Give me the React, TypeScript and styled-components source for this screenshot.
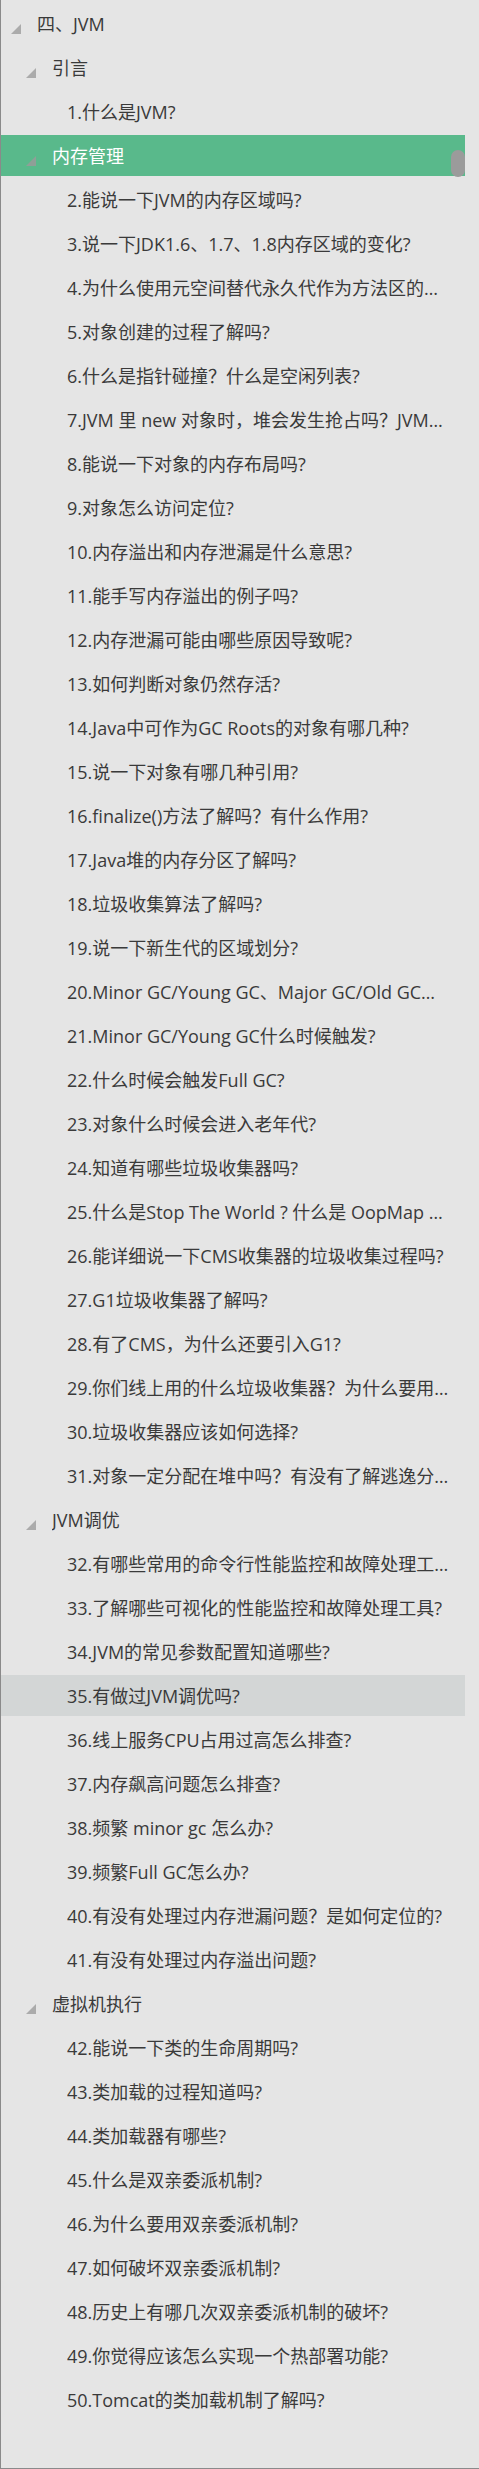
import React from 'react'
import styled, { createGlobalStyle } from 'styled-components'

const GlobalStyle = createGlobalStyle`
  html, body {
    margin: 0;
    padding: 0;
    background: #e5e5e5;
  }
  body {
    font-family: "Open Sans", "Noto Sans CJK SC", sans-serif;
  }
`

const Page = styled.div`
  width: 479px;
  height: 2469px;
  box-sizing: border-box;
  border-left: 1px solid #8a8a8a;
  border-bottom: 1px solid #8a8a8a;
  background: #e5e5e5;
  overflow: hidden;
`

const Tree = styled.ul`
  position: relative;
  width: 464px;
  margin: 0;
  padding: 0;
  list-style: none;
`

type RowState = 'normal' | 'active' | 'hover'

const Row = styled.li<{ $level: number; $state: RowState }>`
  display: flex;
  align-items: center;
  height: 41px;
  margin: 3px 0 1px;
  padding: 0 13px 0 ${(p) => 10 + p.$level * 15}px;
  background: ${(p) =>
    p.$state === 'active' ? '#59b98b' : p.$state === 'hover' ? '#d3d6d6' : 'transparent'};
  color: ${(p) => (p.$state === 'active' ? '#ffffff' : '#3a3a3a')};
  font-size: 18px;
  white-space: nowrap;
`

const Toggle = styled.span<{ $open: boolean; $active: boolean }>`
  flex: none;
  display: flex;
  align-items: flex-end;
  width: 26px;
  height: 20px;
  padding-top: 6px;
  box-sizing: border-box;
  visibility: ${(p) => (p.$open ? 'visible' : 'hidden')};
  svg {
    display: block;
    fill: ${(p) => (p.$active ? '#8f9f97' : '#ababab')};
  }
`

const Label = styled.span`
  flex: 1;
  min-width: 0;
  overflow: hidden;
  text-overflow: ellipsis;
  line-height: 24px;
`

const ScrollThumb = styled.div`
  position: absolute;
  top: 147px;
  right: 0;
  width: 14px;
  height: 27px;
  border-radius: 7px;
  background: #9b9b9b;
`

type Node = { text: string; level: number; group?: boolean; state?: RowState }

const item = (text: string, state?: RowState): Node => ({ text, level: 2, state })
const group = (text: string, level: number, state?: RowState): Node => ({
  text,
  level,
  group: true,
  state,
})

const nodes: Node[] = [
  group('四、JVM', 0),
  group('引言', 1),
  item('1.什么是JVM?'),
  group('内存管理', 1, 'active'),
  item('2.能说一下JVM的内存区域吗?'),
  item('3.说一下JDK1.6、1.7、1.8内存区域的变化?'),
  item('4.为什么使用元空间替代永久代作为方法区的实现?'),
  item('5.对象创建的过程了解吗?'),
  item('6.什么是指针碰撞？什么是空闲列表?'),
  item('7.JVM 里 new 对象时，堆会发生抢占吗？JVM是怎么设计来保证线程安全的?'),
  item('8.能说一下对象的内存布局吗?'),
  item('9.对象怎么访问定位?'),
  item('10.内存溢出和内存泄漏是什么意思?'),
  item('11.能手写内存溢出的例子吗?'),
  item('12.内存泄漏可能由哪些原因导致呢?'),
  item('13.如何判断对象仍然存活?'),
  item('14.Java中可作为GC Roots的对象有哪几种?'),
  item('15.说一下对象有哪几种引用?'),
  item('16.finalize()方法了解吗？有什么作用?'),
  item('17.Java堆的内存分区了解吗?'),
  item('18.垃圾收集算法了解吗?'),
  item('19.说一下新生代的区域划分?'),
  item('20.Minor GC/Young GC、Major GC/Old GC、Mixed GC、Full GC都是什么意思?'),
  item('21.Minor GC/Young GC什么时候触发?'),
  item('22.什么时候会触发Full GC?'),
  item('23.对象什么时候会进入老年代?'),
  item('24.知道有哪些垃圾收集器吗?'),
  item('25.什么是Stop The World ? 什么是 OopMap ？什么是安全点?'),
  item('26.能详细说一下CMS收集器的垃圾收集过程吗?'),
  item('27.G1垃圾收集器了解吗?'),
  item('28.有了CMS，为什么还要引入G1?'),
  item('29.你们线上用的什么垃圾收集器？为什么要用它?'),
  item('30.垃圾收集器应该如何选择?'),
  item('31.对象一定分配在堆中吗？有没有了解逃逸分析技术?'),
  group('JVM调优', 1),
  item('32.有哪些常用的命令行性能监控和故障处理工具?'),
  item('33.了解哪些可视化的性能监控和故障处理工具?'),
  item('34.JVM的常见参数配置知道哪些?'),
  item('35.有做过JVM调优吗?', 'hover'),
  item('36.线上服务CPU占用过高怎么排查?'),
  item('37.内存飙高问题怎么排查?'),
  item('38.频繁 minor gc 怎么办?'),
  item('39.频繁Full GC怎么办?'),
  item('40.有没有处理过内存泄漏问题？是如何定位的?'),
  item('41.有没有处理过内存溢出问题?'),
  group('虚拟机执行', 1),
  item('42.能说一下类的生命周期吗?'),
  item('43.类加载的过程知道吗?'),
  item('44.类加载器有哪些?'),
  item('45.什么是双亲委派机制?'),
  item('46.为什么要用双亲委派机制?'),
  item('47.如何破坏双亲委派机制?'),
  item('48.历史上有哪几次双亲委派机制的破坏?'),
  item('49.你觉得应该怎么实现一个热部署功能?'),
  item('50.Tomcat的类加载机制了解吗?'),
]

const Triangle = () => (
  <svg width="10" height="10" viewBox="0 0 10 10">
    <polygon points="10,0 10,10 0,10" />
  </svg>
)

const App = () => {
  return (
    <>
      <GlobalStyle />
      <Page>
        <Tree>
          {nodes.map((n, i) => (
            <Row key={i} $level={n.level} $state={n.state ?? 'normal'}>
              <Toggle $open={!!n.group} $active={n.state === 'active'}>
                <Triangle />
              </Toggle>
              <Label>{n.text}</Label>
            </Row>
          ))}
          <ScrollThumb />
        </Tree>
      </Page>
    </>
  )
}

export default App
